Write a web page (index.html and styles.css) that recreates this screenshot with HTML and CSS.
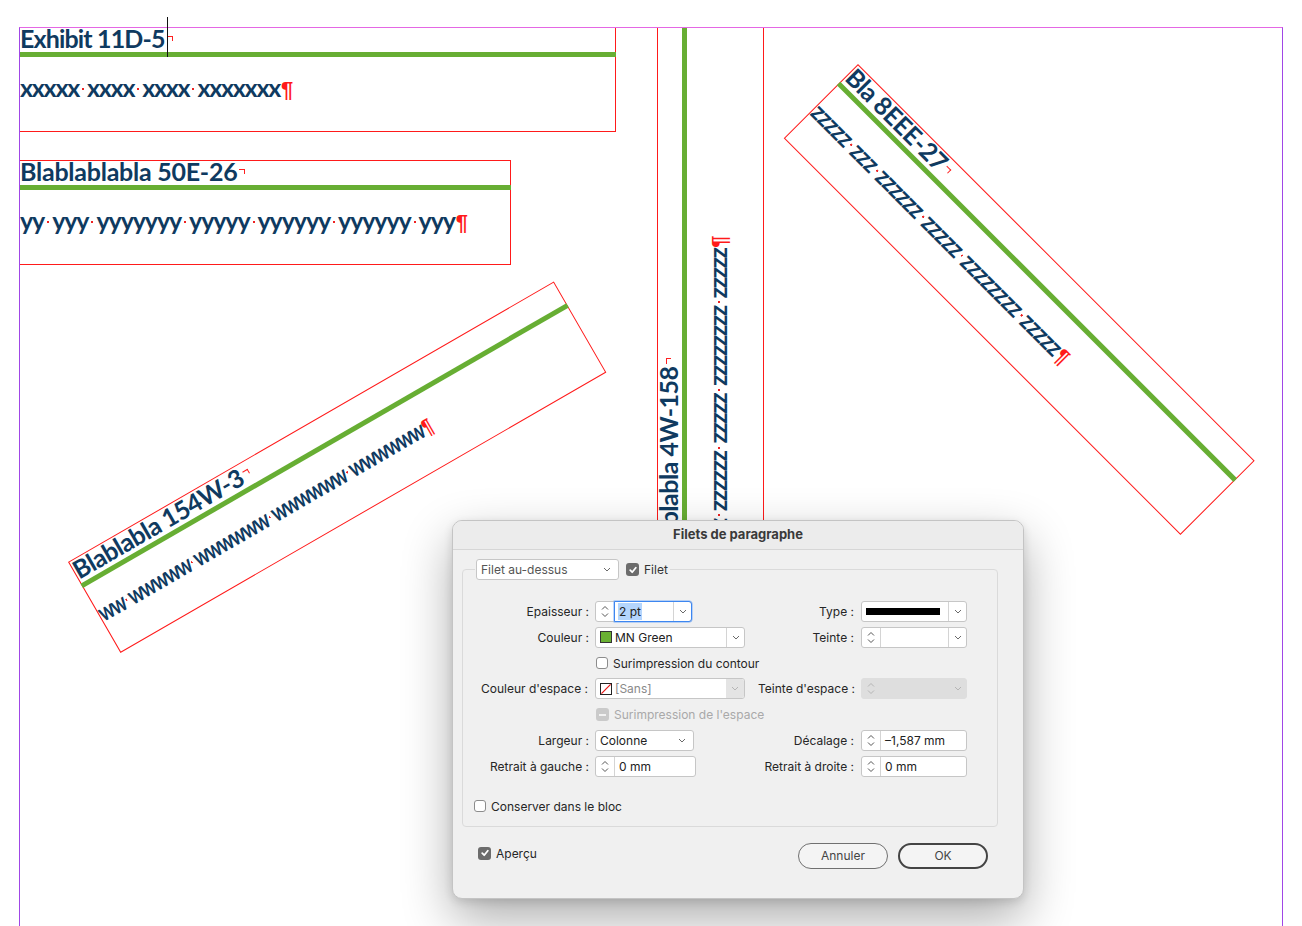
FILE: index.html
```html
<!DOCTYPE html>
<html lang="fr">
<head>
<meta charset="utf-8">
<title>Filets de paragraphe</title>
<link rel="stylesheet" href="styles.css">
</head>
<body>
<div class="canvas">

  <div class="frame f1">
    <div class="ttl tt1">Exhibit 11D-5<span class="brk"></span></div>
    <div class="rule"></div>
    <div class="txt t1">xxxxx<span class="sp"> </span>xxxx<span class="sp"> </span>xxxx<span class="sp"> </span>xxxxxxx<span class="pil">¶</span></div>
  </div>

  <div class="frame f2">
    <div class="ttl tt2">Blablablabla 50E-26<span class="brk"></span></div>
    <div class="rule"></div>
    <div class="txt t2">yy<span class="sp"> </span>yyy<span class="sp"> </span>yyyyyyy<span class="sp"> </span>yyyyy<span class="sp"> </span>yyyyyy<span class="sp"> </span>yyyyyy<span class="sp"> </span>yyy<span class="pil">¶</span></div>
  </div>

  <div class="frame fa">
    <div class="ttl">Blablabla 154W-3<span class="brk"></span></div>
    <div class="rule"></div>
    <div class="txt ta">ww<span class="sp"> </span>wwwww<span class="sp"> </span>wwwwww<span class="sp"> </span>wwwwww<span class="sp"> </span>wwwwww<span class="pil">¶</span></div>
  </div>

  <div class="frame fb">
    <div class="ttl">Bla 8EEE-27<span class="brk"></span></div>
    <div class="rule"></div>
    <div class="txt tb">zzzzz<span class="sp"> </span>zzz<span class="sp"> </span>zzzzzz<span class="sp"> </span>zzzzz<span class="sp"> </span>zzzzzzzz<span class="sp"> </span>zzzzz<span class="pil">¶</span></div>
  </div>

  <div class="frame fc">
    <div class="ttl">Blablabla 4W-158<span class="brk"></span></div>
    <div class="rule"></div>
    <div class="txt tc">zzzz<span class="sp"> </span>zzzzzz<span class="sp"> </span>zzzzz<span class="sp"> </span>zzzzzzzz<span class="sp"> </span>zzzzz<span class="pil">¶</span></div>
  </div>

  <div class="page"></div>
  <div class="caret"></div>

  <div class="dialog">
    <div class="dlg-title">Filets de paragraphe</div>
    <div class="dlg-body">
      <fieldset class="grp">
        <legend class="grp-head">
          <span class="field popup w-head"><span class="val">Filet au-dessus</span><svg class="chev" viewBox="0 0 8 5"><path d="M1 1 L4 4 L7 1"/></svg></span>
          <span class="chk"><span class="box on"><svg viewBox="0 0 10 10"><path d="M2.2 5.2 L4.2 7.2 L7.8 2.8"/></svg></span><span class="cl">Filet</span></span>
        </legend>

        <div class="grid">
          <span class="lbl">Epaisseur :</span>
          <span class="field w97">
            <span class="arrows"><svg viewBox="0 0 8 13"><path d="M1 4.5 L4 1.5 L7 4.5 M1 8.5 L4 11.5 L7 8.5"/></svg></span>
            <span class="focus"><span class="val"><span class="sel">2 pt</span></span><span class="drop sepl"><svg class="chev" viewBox="0 0 8 5"><path d="M1 1 L4 4 L7 1"/></svg></span></span>
          </span>
          <span class="lbl">Type :</span>
          <span class="field w106">
            <span class="val"><span class="stroke"></span></span>
            <span class="drop sepl"><svg class="chev" viewBox="0 0 8 5"><path d="M1 1 L4 4 L7 1"/></svg></span>
          </span>

          <span class="lbl">Couleur :</span>
          <span class="field w150">
            <span class="val"><span class="swatch green"></span>MN Green</span>
            <span class="drop sepl"><svg class="chev" viewBox="0 0 8 5"><path d="M1 1 L4 4 L7 1"/></svg></span>
          </span>
          <span class="lbl">Teinte :</span>
          <span class="field w106">
            <span class="arrows"><svg viewBox="0 0 8 13"><path d="M1 4.5 L4 1.5 L7 4.5 M1 8.5 L4 11.5 L7 8.5"/></svg></span>
            <span class="val sepl"></span>
            <span class="drop sepl"><svg class="chev" viewBox="0 0 8 5"><path d="M1 1 L4 4 L7 1"/></svg></span>
          </span>

          <span class="lbl"></span>
          <span class="chk span3"><span class="box"></span><span class="cl">Surimpression du contour</span></span>

          <span class="lbl">Couleur d'espace :</span>
          <span class="field w150">
            <span class="val dim"><span class="swatch none"><svg viewBox="0 0 12 12"><path d="M0.5 11.5 L11.5 0.5"/></svg></span>[Sans]</span>
            <span class="drop grey"><svg class="chev light" viewBox="0 0 8 5"><path d="M1 1 L4 4 L7 1"/></svg></span>
          </span>
          <span class="lbl">Teinte d'espace :</span>
          <span class="field w106 disabled">
            <span class="arrows"><svg class="light" viewBox="0 0 8 13"><path d="M1 4.5 L4 1.5 L7 4.5 M1 8.5 L4 11.5 L7 8.5"/></svg></span>
            <span class="val"></span>
            <span class="drop"><svg class="chev light" viewBox="0 0 8 5"><path d="M1 1 L4 4 L7 1"/></svg></span>
          </span>

          <span class="lbl"></span>
          <span class="chk span3 off"><span class="box mixed"><span class="dash"></span></span><span class="cl">Surimpression de l'espace</span></span>

          <span class="lbl">Largeur :</span>
          <span class="field popup w99"><span class="val">Colonne</span><svg class="chev" viewBox="0 0 8 5"><path d="M1 1 L4 4 L7 1"/></svg></span>
          <span class="lbl">Décalage :</span>
          <span class="field w106">
            <span class="arrows"><svg viewBox="0 0 8 13"><path d="M1 4.5 L4 1.5 L7 4.5 M1 8.5 L4 11.5 L7 8.5"/></svg></span>
            <span class="val sepl">–1,587 mm</span>
          </span>

          <span class="lbl">Retrait à gauche :</span>
          <span class="field w101">
            <span class="arrows"><svg viewBox="0 0 8 13"><path d="M1 4.5 L4 1.5 L7 4.5 M1 8.5 L4 11.5 L7 8.5"/></svg></span>
            <span class="val sepl">0 mm</span>
          </span>
          <span class="lbl">Retrait à droite :</span>
          <span class="field w106">
            <span class="arrows"><svg viewBox="0 0 8 13"><path d="M1 4.5 L4 1.5 L7 4.5 M1 8.5 L4 11.5 L7 8.5"/></svg></span>
            <span class="val sepl">0 mm</span>
          </span>
        </div>

        <span class="chk keep"><span class="box"></span><span class="cl">Conserver dans le bloc</span></span>
      </fieldset>

      <div class="footer">
        <span class="chk"><span class="box on"><svg viewBox="0 0 10 10"><path d="M2.2 5.2 L4.2 7.2 L7.8 2.8"/></svg></span><span class="cl">Aperçu</span></span>
        <div class="btns">
          <button class="btn" type="button">Annuler</button>
          <button class="btn ok" type="button">OK</button>
        </div>
      </div>
    </div>
  </div>

</div>
</body>
</html>
```

FILE: styles.css
```css
html, body {
  margin: 0;
  padding: 0;
  background: #ffffff;
}

.canvas {
  position: relative;
  width: 1302px;
  height: 926px;
  overflow: hidden;
  background: #ffffff;
}

/* page guides */
.page {
  position: absolute;
  left: 19px;
  top: 27px;
  width: 1264px;
  height: 899px;
  box-sizing: border-box;
  border-top: 1px solid #e467e4;
  border-left: 1px solid #a046e6;
  border-right: 1px solid #a046e6;
  z-index: 2;
}

.caret {
  position: absolute;
  left: 167px;
  top: 17px;
  width: 1px;
  height: 40px;
  background: #111;
  z-index: 3;
}

/* text frames */
.frame {
  position: absolute;
  box-sizing: border-box;
  height: 105px;
  border: 1px solid #ff1a1a;
  transform-origin: 0 0;
  color: #0f3a60;
  font-family: Lato, "Open Sans", sans-serif;
  font-weight: 700;
  white-space: nowrap;
}

.f1 { left: 19px; top: 27px; width: 597px; }
.f2 { left: 19px; top: 160px; width: 492px; }
.fa { left: 68px; top: 562px; width: 561px; transform: rotate(-30deg); }
.fb { left: 858px; top: 64px; width: 561px; transform: rotate(45deg); }
.fc { left: 657px; top: 560px; width: 533px; height: 107px; transform: rotate(-90deg); }

.ttl {
  font-size: 25px;
  line-height: 20px;
  height: 20px;
  letter-spacing: -0.5px;
}
.tt1 { letter-spacing: -0.85px; }
.tt2 { letter-spacing: -0.25px; }

.rule {
  margin-top: 4px;
  height: 5px;
  background: #67ae33;
  margin-left: -1px;
  margin-right: -1px;
}

.txt {
  margin-top: 18px;
  font-size: 25px;
  line-height: 25px;
  transform-origin: 0 0;
}

.t1 { letter-spacing: -1.25px; }
.t2 { letter-spacing: -1.1px; }
.ta { letter-spacing: -2px; transform: scaleX(0.77); }
.tb { letter-spacing: -0.8px; transform: scaleX(0.9); }
.tc { letter-spacing: -1.55px; }

.sp {
  display: inline-block;
  width: 8px;
  height: 2px;
  vertical-align: 0.28em;
  background: linear-gradient(90deg, transparent 3px, #ee2222 3px, #ee2222 5px, transparent 5px);
}

.brk {
  display: inline-block;
  width: 5px;
  height: 4px;
  margin-left: 2px;
  border-top: 1.5px solid #ff2020;
  border-right: 1.5px solid #ff2020;
  vertical-align: 0.3em;
  letter-spacing: 0;
}

.pil {
  color: #ff1a1a;
  font-family: "Liberation Sans", sans-serif;
  font-weight: 700;
  font-size: 22px;
  letter-spacing: 0;
  margin-left: 1px;
}

/* dialog */
.dialog {
  position: absolute;
  left: 452px;
  top: 520px;
  width: 572px;
  height: 379px;
  box-sizing: border-box;
  border-radius: 10px;
  background: #f0f0f0;
  border: 1px solid #c4c4c4;
  box-shadow: 0 20px 50px rgba(0, 0, 0, 0.32), 0 3px 10px rgba(0, 0, 0, 0.12);
  z-index: 5;
  font-family: Inter, "Open Sans", sans-serif;
  font-size: 12px;
  color: #262626;
  overflow: hidden;
}

.dlg-title {
  height: 28px;
  line-height: 27px;
  text-align: center;
  font-weight: 700;
  font-size: 13px;
  color: #3a3a3a;
  background: #ececec;
  border-bottom: 1px solid #d6d6d6;
}

.dlg-body {
  padding: 9px 25px 0 9px;
}

.grp {
  margin: 0;
  padding: 21px 0 9px 0;
  border: 1px solid #dadada;
  border-radius: 4px;
  min-width: 0;
}

.grp-head {
  margin-left: 12px;
  padding: 0 2px 0 1px;
  display: flex;
  align-items: center;
  gap: 7px;
}

.grid {
  display: grid;
  grid-template-columns: 132px 150px 116px 106px;
  grid-template-rows: repeat(7, 21px);
  row-gap: 4.8px;
  align-items: center;
}

.lbl {
  text-align: right;
  padding-right: 6px;
  white-space: nowrap;
}
.grid .lbl:nth-child(4n+3) { padding-right: 7px; }

.field {
  display: flex;
  align-items: stretch;
  box-sizing: border-box;
  height: 21px;
  background: #ffffff;
  border: 1px solid #c6c6c6;
  border-radius: 3px;
  color: #222;
  overflow: hidden;
}
.w-head { width: 143px; height: 21px; color: #555; }
.w97 { width: 97px; overflow: visible; }
.w99 { width: 99px; }
.w101 { width: 101px; }
.w106 { width: 106px; }
.w150 { width: 150px; }

.val {
  flex: 1;
  display: flex;
  align-items: center;
  padding-left: 4px;
  white-space: nowrap;
  min-width: 0;
}
.popup .val { padding-left: 4px; }
.popup { align-items: center; padding-right: 7px; }

.sepl { border-left: 1px solid #d4d4d4; }

.drop {
  width: 17px;
  display: flex;
  align-items: center;
  justify-content: center;
}
.drop.grey { background: #e4e4e4; width: 18px; }

.chev {
  width: 8px;
  height: 5px;
  fill: none;
  stroke: #6a6a6a;
  stroke-width: 1;
}
.chev.light, .arrows svg.light { stroke: #b5b5b5; }

.arrows {
  width: 18px;
  display: flex;
  align-items: center;
  justify-content: center;
}
.arrows svg {
  width: 8px;
  height: 13px;
  fill: none;
  stroke: #555;
  stroke-width: 1;
}

.focus {
  flex: 1;
  display: flex;
  margin: -1px -1px -1px 0;
  border: 1px solid #3d86f0;
  border-radius: 0 3px 3px 0;
  box-shadow: 0 0 0 0.5px #7fb0f7;
}
.focus .val { padding-left: 3px; }

.sel {
  background: #b4d5fd;
  padding: 1px 1px;
  line-height: 15px;
}

.stroke {
  display: block;
  width: 74px;
  height: 7px;
  background: #000;
}

.swatch {
  width: 12px;
  height: 12px;
  box-sizing: border-box;
  border: 1px solid #333;
  margin-right: 3px;
  flex: none;
}
.swatch.green { background: #6ab133; }
.swatch.none { background: #fff; border-color: #222; }
.swatch.none svg { display: block; width: 10px; height: 10px; stroke: #e81010; stroke-width: 1.4; }

.dim { color: #8a8a8a; }

.disabled { background: #dedede; border-color: #dedede; }

/* checkboxes */
.chk {
  display: flex;
  align-items: center;
  gap: 5px;
  white-space: nowrap;
}
.span3 { grid-column: 2 / span 3; padding-left: 1px; }
.box {
  width: 12px;
  height: 12px;
  box-sizing: border-box;
  border: 1px solid #8c8c8c;
  border-radius: 3px;
  background: #fff;
  display: flex;
  align-items: center;
  justify-content: center;
  flex: none;
}
.box.on {
  width: 13px;
  height: 13px;
  border: none;
  background: #6c6c6c;
}
.box.on svg {
  width: 10px;
  height: 10px;
  fill: none;
  stroke: #fff;
  stroke-width: 1.8;
  stroke-linecap: round;
  stroke-linejoin: round;
}
.box.mixed {
  border: none;
  width: 13px;
  height: 13px;
  background: #cacaca;
}
.dash { width: 7px; height: 2px; background: #f2f2f2; }
.off .cl { color: #a9a9a9; }
.grp-head .cl { color: #333; }

.keep {
  margin: 19px 0 0 11px;
  height: 21px;
}

.footer {
  display: flex;
  align-items: center;
  justify-content: space-between;
  padding: 16px 10px 0 16px;
}
.footer .chk { margin-top: -5px; }

.btns {
  display: flex;
  gap: 10px;
}
.btn {
  width: 90px;
  height: 26px;
  box-sizing: border-box;
  border: 1px solid #707070;
  border-radius: 13px;
  background: #f4f4f4;
  font-family: Inter, "Open Sans", sans-serif;
  font-size: 12px;
  color: #444;
  padding: 0;
}
.btn.ok {
  border: 2px solid #444;
}
```
